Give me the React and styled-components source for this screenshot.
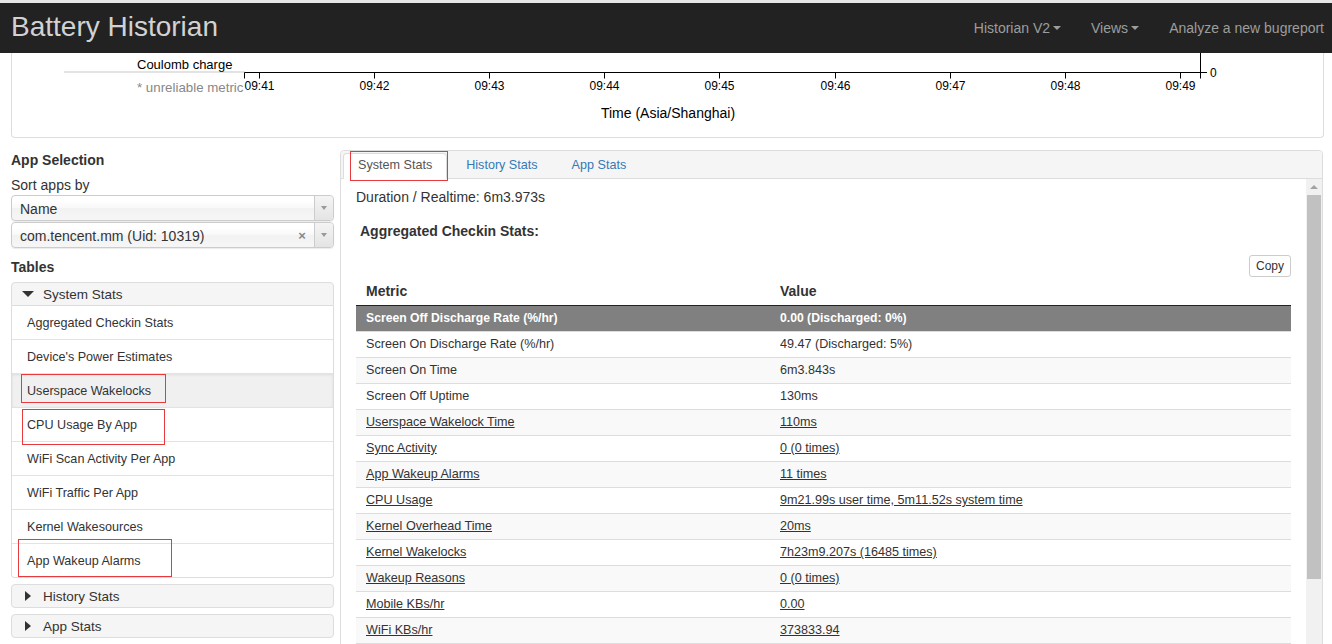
import React from "react";
import styled, { createGlobalStyle } from "styled-components";

const GlobalStyle = createGlobalStyle`
  html, body { margin: 0; padding: 0; height: 644px; overflow: hidden; background: #fff; }
  body { font-family: "Liberation Sans", Arial, Helvetica, sans-serif; color: #333; font-size: 14px; }
  * { box-sizing: border-box; }
`;

const Page = styled.div`
  border-top: 3px solid #e6e6e6;
`;

const Navbar = styled.nav`
  height: 50px;
  background: #222;
  display: flex;
  align-items: center;
  justify-content: space-between;
  padding: 0 8px 0 11px;
`;

const Brand = styled.div`
  font-size: 28px;
  color: #d2d2d2;
  line-height: 1;
  margin-top: -2px;
`;

const NavLinks = styled.div`
  display: flex;
  align-items: center;
  gap: 30px;
`;

const NavLink = styled.a`
  display: flex;
  align-items: center;
  color: #9d9d9d;
  font-size: 14px;
  text-decoration: none;
`;

const Caret = styled.span`
  display: inline-block;
  margin-left: 3px;
  border-top: 4px solid #9d9d9d;
  border-left: 4px solid transparent;
  border-right: 4px solid transparent;
`;

const ChartPanel = styled.div`
  margin: 0 8px 0 11px;
  height: 85px;
  border: 1px solid #ddd;
  border-top: 0;
  border-radius: 0 0 4px 4px;
  svg { display: block; }
`;

const Main = styled.div`
  display: flex;
  gap: 6px;
  padding: 12px 9px 0 11px;
`;

const Sidebar = styled.aside`
  width: 323px;
  flex-shrink: 0;
`;

const SideTitle = styled.div`
  font-size: 14px;
  font-weight: bold;
  line-height: 20px;
  margin-top: ${(p) => p.$mt || 0}px;
`;

const Label = styled.div`
  font-size: 14px;
  line-height: 20px;
  margin-top: 5px;
`;

const Chosen = styled.div`
  display: flex;
  align-items: center;
  height: 26px;
  margin-top: ${(p) => p.$mt || 0}px;
  padding: 1px 0 0 8px;
  font-size: 14px;
  border: 1px solid #ccc;
  border-radius: 4px;
  background: linear-gradient(#fff 20%, #f8f8f8 50%, #f2f2f2 52%, #f6f6f6);
  box-shadow: 0 1px 1px rgba(0, 0, 0, 0.08);
`;

const ChosenText = styled.span`
  flex: 1;
`;

const Clear = styled.span`
  width: 14px;
  margin-right: 5px;
  font-size: 13px;
  font-weight: bold;
  color: #888;
  text-align: center;
`;

const ArrowCell = styled.span`
  align-self: stretch;
  width: 19px;
  margin-top: -1px;
  display: flex;
  align-items: center;
  justify-content: center;
  border-left: 1px solid #ccc;
  border-radius: 0 4px 4px 0;
  background: linear-gradient(#f4f4f4, #e4e4e4);
  &::after {
    content: "";
    border-top: 4px solid #999;
    border-left: 3px solid transparent;
    border-right: 3px solid transparent;
  }
`;

const AccHeader = styled.div`
  height: 24px;
  display: flex;
  align-items: center;
  padding-left: 10px;
  margin-top: ${(p) => p.$mt || 0}px;
  background: #f5f5f5;
  border: 1px solid #ddd;
  border-radius: ${(p) => (p.$open ? "4px 4px 0 0" : "4px")};
  font-size: 13.5px;
`;

const TriSlot = styled.span`
  width: 12px;
  margin-right: 9px;
  display: flex;
  justify-content: center;
  &::before {
    content: "";
    ${(p) =>
      p.$open
        ? "border-top: 6px solid #333; border-left: 6px solid transparent; border-right: 6px solid transparent;"
        : "border-left: 6px solid #333; border-top: 5px solid transparent; border-bottom: 5px solid transparent;"}
  }
`;

const ItemList = styled.div`
  border: 1px solid #ddd;
  border-top: 0;
  border-radius: 0 0 4px 4px;
`;

const Item = styled.div`
  position: relative;
  height: 34px;
  display: flex;
  align-items: center;
  padding-left: 15px;
  font-size: 12.6px;
  border-bottom: 1px solid #e3e3e3;
  background: ${(p) => (p.$active ? "#f0f0f0" : "#fff")};
  box-shadow: ${(p) => (p.$active ? "inset 0 1px 3px rgba(0,0,0,0.08)" : "none")};
  &:last-child {
    height: 33px;
    border-bottom: 0;
    border-radius: 0 0 4px 4px;
  }
`;

const Mark = styled.span`
  position: absolute;
  z-index: 2;
  pointer-events: none;
  border: 1px solid #e8393c;
  left: ${(p) => p.$l}px;
  top: ${(p) => p.$t}px;
  width: ${(p) => p.$w}px;
  height: ${(p) => p.$h}px;
`;

const StatsPanel = styled.section`
  flex: 1;
  height: 520px;
  display: flex;
  flex-direction: column;
  border: 1px solid #ddd;
  border-radius: 4px 4px 0 0;
`;

const TabBar = styled.div`
  display: flex;
  gap: 4px;
  height: 28px;
  padding: 2px 0 0 2px;
  background: #f5f5f5;
  border-bottom: 1px solid #ddd;
  border-radius: 4px 4px 0 0;
`;

const Tab = styled.div`
  position: relative;
  height: 26px;
  line-height: 22px;
  padding: 0 14px 0 14px;
  font-size: 12.6px;
  color: ${(p) => (p.$active ? "#555" : "#337ab7")};
  background: ${(p) => (p.$active ? "#fff" : "transparent")};
  border: 1px solid ${(p) => (p.$active ? "#ddd" : "transparent")};
  border-bottom-color: transparent;
  border-radius: 4px 4px 0 0;
`;

const PanelBody = styled.div`
  flex: 1;
  display: flex;
`;

const Content = styled.div`
  flex: 1;
  display: flex;
  flex-direction: column;
  padding: 8px 15px 0 15px;
`;

const Duration = styled.div`
  font-size: 14px;
  line-height: 20px;
`;

const SectionTitle = styled.div`
  margin: 14px 0 0 4px;
  font-size: 14px;
  font-weight: bold;
  line-height: 20px;
`;

const CopyRow = styled.div`
  display: flex;
  justify-content: flex-end;
  margin-top: 14px;
`;

const CopyButton = styled.button`
  height: 22px;
  padding: 0 6px;
  font-family: inherit;
  font-size: 12px;
  color: #333;
  background: #fff;
  border: 1px solid #ccc;
  border-radius: 3px;
`;

const Table = styled.table`
  width: 100%;
  margin-top: 1px;
  border-collapse: collapse;
`;

const Th = styled.th`
  height: 27px;
  padding: 0 10px;
  text-align: left;
  font-size: 14px;
  border-bottom: 1px solid #222;
  width: ${(p) => p.$w || "auto"};
`;

const Tr = styled.tr`
  background: ${(p) => (p.$hl ? "#808080" : p.$odd ? "#f9f9f9" : "#fff")};
  color: ${(p) => (p.$hl ? "#fff" : "#333")};
`;

const Td = styled.td`
  height: 26px;
  padding: 0 10px;
  font-size: ${(p) => (p.$hl ? "12.2px" : "12.6px")};
  border-bottom: 1px solid #ddd;
  font-weight: ${(p) => (p.$hl ? "bold" : "normal")};
`;

const CellLink = styled.a`
  color: #333;
  text-decoration: underline;
`;

const Scrollbar = styled.div`
  width: 16px;
  background: #f1f1f1;
  display: flex;
  flex-direction: column;
  align-items: center;
`;

const ScrollArrow = styled.div`
  height: 16px;
  display: flex;
  align-items: center;
  &::before {
    content: "";
    border-bottom: 4px solid #a3a3a3;
    border-left: 4px solid transparent;
    border-right: 4px solid transparent;
  }
`;

const ScrollThumb = styled.div`
  width: 14px;
  height: 384px;
  background: #c1c1c1;
`;

const ticks = ["09:41", "09:42", "09:43", "09:44", "09:45", "09:46", "09:47", "09:48", "09:49"];

const Chart = () => (
  <svg width="1311" height="84">
    <line x1="52" y1="19" x2="233" y2="19" stroke="#e3e3e3" strokeWidth="2" />
    <text x="125" y="16" fontSize="13" fill="#000">Coulomb charge</text>
    <text x="125" y="39" fontSize="13.3" fill="#888">* unreliable metric</text>
    <path d="M232.5 25.5 V19.5 H1195" stroke="#000" fill="none" />
    <line x1="1188.5" y1="0" x2="1188.5" y2="25.5" stroke="#000" />
    <text x="1198" y="24" fontSize="12" fill="#000">0</text>
    {ticks.map((t, i) => {
      const x = Math.round(247 + i * 115.1) + 0.5;
      return (
        <g key={t}>
          <line x1={x} y1="19.5" x2={x} y2="25.5" stroke="#000" />
          <text x={x} y="37" fontSize="12" textAnchor="middle" fill="#000">{t}</text>
        </g>
      );
    })}
    <text x="656" y="65" fontSize="14" textAnchor="middle" fill="#000">Time (Asia/Shanghai)</text>
  </svg>
);

const tables = [
  { name: "Aggregated Checkin Stats" },
  { name: "Device's Power Estimates" },
  { name: "Userspace Wakelocks", active: true, mark: [9, 0, 145, 29] },
  { name: "CPU Usage By App", mark: [10, 1, 143, 36] },
  { name: "WiFi Scan Activity Per App" },
  { name: "WiFi Traffic Per App" },
  { name: "Kernel Wakesources" },
  { name: "App Wakeup Alarms", mark: [6, -5, 154, 38] },
];

const rows = [
  ["Screen Off Discharge Rate (%/hr)", "0.00 (Discharged: 0%)", false],
  ["Screen On Discharge Rate (%/hr)", "49.47 (Discharged: 5%)", false],
  ["Screen On Time", "6m3.843s", false],
  ["Screen Off Uptime", "130ms", false],
  ["Userspace Wakelock Time", "110ms", true],
  ["Sync Activity", "0 (0 times)", true],
  ["App Wakeup Alarms", "11 times", true],
  ["CPU Usage", "9m21.99s user time, 5m11.52s system time", true],
  ["Kernel Overhead Time", "20ms", true],
  ["Kernel Wakelocks", "7h23m9.207s (16485 times)", true],
  ["Wakeup Reasons", "0 (0 times)", true],
  ["Mobile KBs/hr", "0.00", true],
  ["WiFi KBs/hr", "373833.94", true],
];

const App = () => {
  return (
    <Page>
      <GlobalStyle />
      <Navbar>
        <Brand>Battery Historian</Brand>
        <NavLinks>
          <NavLink>Historian V2<Caret /></NavLink>
          <NavLink>Views<Caret /></NavLink>
          <NavLink>Analyze a new bugreport</NavLink>
        </NavLinks>
      </Navbar>

      <ChartPanel>
        <Chart />
      </ChartPanel>

      <Main>
        <Sidebar>
          <SideTitle>App Selection</SideTitle>
          <Label>Sort apps by</Label>
          <Chosen>
            <ChosenText>Name</ChosenText>
            <ArrowCell />
          </Chosen>
          <Chosen $mt={1}>
            <ChosenText>com.tencent.mm (Uid: 10319)</ChosenText>
            <Clear>×</Clear>
            <ArrowCell />
          </Chosen>
          <SideTitle $mt={9}>Tables</SideTitle>
          <AccHeader $open $mt={5}>
            <TriSlot $open />System Stats
          </AccHeader>
          <ItemList>
            {tables.map((t) => (
              <Item key={t.name} $active={t.active}>
                {t.name}
                {t.mark && <Mark $l={t.mark[0]} $t={t.mark[1]} $w={t.mark[2]} $h={t.mark[3]} />}
              </Item>
            ))}
          </ItemList>
          <AccHeader $mt={6}>
            <TriSlot />History Stats
          </AccHeader>
          <AccHeader $mt={6}>
            <TriSlot />App Stats
          </AccHeader>
        </Sidebar>

        <StatsPanel>
          <TabBar>
            <Tab $active>
              System Stats
              <Mark $l={6} $t={-3} $w={98} $h={30} />
            </Tab>
            <Tab>History Stats</Tab>
            <Tab>App Stats</Tab>
          </TabBar>
          <PanelBody>
            <Content>
              <Duration>Duration / Realtime: 6m3.973s</Duration>
              <SectionTitle>Aggregated Checkin Stats:</SectionTitle>
              <CopyRow>
                <CopyButton>Copy</CopyButton>
              </CopyRow>
              <Table>
                <thead>
                  <tr>
                    <Th $w="414px">Metric</Th>
                    <Th>Value</Th>
                  </tr>
                </thead>
                <tbody>
                  {rows.map(([metric, value, link], i) => (
                    <Tr key={metric} $hl={i === 0} $odd={i % 2 === 0}>
                      <Td $hl={i === 0}>{link ? <CellLink>{metric}</CellLink> : metric}</Td>
                      <Td $hl={i === 0}>{link ? <CellLink>{value}</CellLink> : value}</Td>
                    </Tr>
                  ))}
                </tbody>
              </Table>
            </Content>
            <Scrollbar>
              <ScrollArrow />
              <ScrollThumb />
            </Scrollbar>
          </PanelBody>
        </StatsPanel>
      </Main>
    </Page>
  );
};

export default App;
